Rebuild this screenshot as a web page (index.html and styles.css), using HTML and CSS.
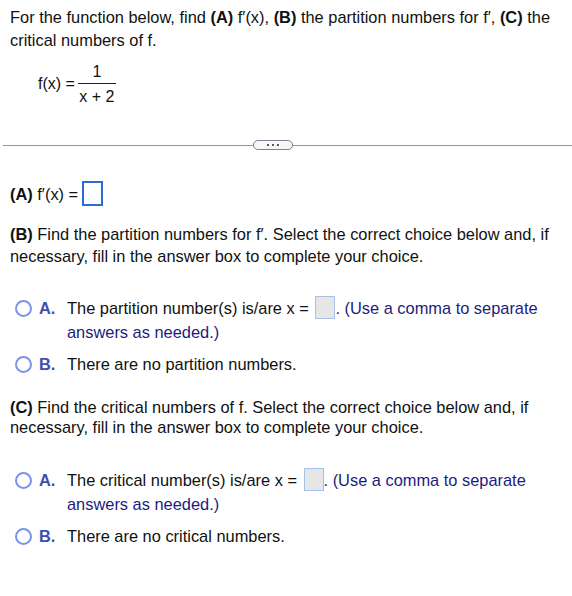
FILE: index.html
```html
<!DOCTYPE html>
<html>
<head>
<meta charset="utf-8">
<link rel="stylesheet" href="styles.css">
</head>
<body>
<div class="page">
  <p class="intro">For the function below, find <b>(A)</b> f′(x), <b>(B)</b> the partition numbers for f′, <b>(C)</b> the critical numbers of f.</p>
  <div class="formula">
    <span class="lhs">f(x) =</span>
    <span class="frac"><span class="num">1</span><span class="den">x + 2</span></span>
  </div>
</div>
<div class="divider"><span class="more"><i></i><i></i><i></i></span></div>
<div class="page">
  <div class="parta"><b>(A)</b>&nbsp;f′(x) = <span class="box-active"></span></div>
  <p class="part partb"><b>(B)</b> Find the partition numbers for f′. Select the correct choice below and, if necessary, fill in the answer box to complete your choice.</p>
  <div class="choices">
    <div class="choice">
      <span class="radio"></span><span class="letter">A.</span>
      <span class="ctext">The partition number(s) is/are x = <span class="box"></span><span class="note">. (Use a comma to separate answers as needed.)</span></span>
    </div>
    <div class="choice">
      <span class="radio"></span><span class="letter">B.</span>
      <span class="ctext">There are no partition numbers.</span>
    </div>
  </div>
  <p class="part partc"><b>(C)</b> Find the critical numbers of f. Select the correct choice below and, if necessary, fill in the answer box to complete your choice.</p>
  <div class="choices">
    <div class="choice">
      <span class="radio"></span><span class="letter">A.</span>
      <span class="ctext">The critical number(s) is/are x = <span class="box"></span><span class="note">. (Use a comma to separate answers as needed.)</span></span>
    </div>
    <div class="choice">
      <span class="radio"></span><span class="letter">B.</span>
      <span class="ctext">There are no critical numbers.</span>
    </div>
  </div>
</div>
</body>
</html>
```
FILE: styles.css
```css
html, body {
  margin: 0;
  padding: 0;
  background: #fff;
}
body {
  font-family: "Liberation Sans", Arial, sans-serif;
  font-size: 16.4px;
  color: #111;
}
.page {
  padding: 0 10px;
}
p { margin: 0; }
.intro {
  padding-top: 6px;
  line-height: 23px;
}
.formula {
  display: flex;
  align-items: center;
  margin-top: 11px;
  padding-left: 28px;
  font-size: 16px;
}
.lhs { margin-right: 3px; }
.frac {
  display: inline-flex;
  flex-direction: column;
  align-items: center;
}
.num {
  padding: 0 0 3px;
  border-bottom: 1px solid #222;
  width: 38px;
  text-align: center;
  line-height: 17px;
}
.den {
  line-height: 17px;
  padding-top: 4px;
}
.divider {
  position: relative;
  margin: 40px 0 0 3px;
  height: 1px;
  background: #8c95a6;
}
.more {
  position: absolute;
  left: 250px;
  top: -5px;
  width: 38px;
  height: 8px;
  border: 1px solid #7b8293;
  border-radius: 5px;
  background: #f6f7f9;
  display: flex;
  align-items: center;
  justify-content: center;
  gap: 3px;
}
.more i {
  width: 2px;
  height: 2px;
  background: #555c6b;
}
.parta {
  margin-top: 35px;
  display: flex;
  align-items: center;
  line-height: 24px;
}
.box-active {
  display: inline-block;
  width: 17px;
  height: 21px;
  border: 2px solid #2d6bd6;
  margin-left: 4px;
}
.part {
  line-height: 22px;
}
.partb { margin-top: 17px; }
.partc { margin-top: 21px; line-height: 20px; }
.choices {
  display: flex;
  flex-direction: column;
  gap: 8px;
}
.partb + .choices { margin-top: 29px; }
.partc + .choices { margin-top: 31px; }
.choice {
  display: flex;
  align-items: flex-start;
  line-height: 24px;
}
.radio {
  flex: none;
  width: 13px;
  height: 13px;
  border: 2px solid #7d93e4;
  border-radius: 50%;
  margin: 4px 7px 0 5px;
}
.letter {
  flex: none;
  width: 28px;
  font-weight: bold;
  color: #3c4fb0;
}
.ctext {
  flex: 1;
  padding-right: 8px;
}
.box {
  display: inline-block;
  width: 18px;
  height: 21px;
  vertical-align: -5px;
  background: #e6e6e6;
  border: 1px solid #a9c0e8;
  margin-left: 2px;
}
.note { color: #1c1c7e; }
```
